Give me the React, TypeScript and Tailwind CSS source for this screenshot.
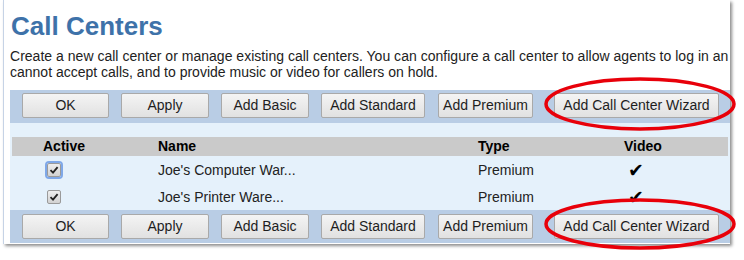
import React from "react";

const btn =
  "h-[25px] shrink-0 rounded-[2px] border border-[#a9a9a9] bg-gradient-to-b from-[#f4f4f4] to-[#e1e1e1] text-[14px] leading-[23px] text-[#1e1e1e] text-center";

function ButtonBar({ pt, pb }: { pt: string; pb: string }) {
  return (
    <div className={`flex bg-[#b9cde5] pl-[12px] ${pt} ${pb}`}>
      <div className={`${btn} w-[87px]`}>OK</div>
      <div className={`${btn} w-[88px] ml-[12px]`}>Apply</div>
      <div className={`${btn} w-[88px] ml-[12px]`}>Add Basic</div>
      <div className={`${btn} w-[104px] ml-[12px]`}>Add Standard</div>
      <div className={`${btn} w-[95px] ml-[13px]`}>Add Premium</div>
      <div className={`${btn} w-[165px] ml-[21px]`}>Add Call Center Wizard</div>
    </div>
  );
}

function Check({ focused }: { focused?: boolean }) {
  return (
    <div
      className={`flex h-[14px] w-[14px] items-center justify-center rounded-[2px] border border-[#9a9a9a] bg-gradient-to-b from-[#eeeeee] to-[#d2d2d2] ${
        focused ? "outline outline-2 outline-[#7fa8e8]" : ""
      }`}
    >
      <svg width="10" height="10" viewBox="0 0 10 10">
        <path d="M1.5 5.2 L4 7.6 L8.6 2.2" fill="none" stroke="#222" strokeWidth="1.8" />
      </svg>
    </div>
  );
}

function VideoCheck() {
  return (
    <div className="pl-[30px] text-[19px] leading-[20px] text-black" style={{ fontFamily: '"DejaVu Sans", sans-serif' }}>
      ✔
    </div>
  );
}

export default function App() {
  return (
    <div
      className="relative h-[260px] w-[744px] overflow-hidden bg-white"
      style={{ fontFamily: '"Liberation Sans", Arial, sans-serif' }}
    >
      <div className="ml-[3px] h-[244px] w-[727px] overflow-hidden border-l border-[#c6d3e6] bg-white pl-[6px] shadow-[2px_2px_3px_rgba(0,0,0,0.45)]">
        <div className="pt-[10px] pl-[1px] text-[26px] font-bold leading-[32px] text-[#3e72a9]">
          Call Centers
        </div>
        <div className="mt-[6px] overflow-hidden whitespace-nowrap text-[14px] leading-[16px] text-[#222]">
          <div className="tracking-[0.02px]">
            Create a new call center or manage existing call centers. You can configure a call center to allow agents to log in an
          </div>
          <div>cannot accept calls, and to provide music or video for callers on hold.</div>
        </div>
        <div className="mt-[10px]">
          <ButtonBar pt="pt-[3px]" pb="pb-[5px]" />
          <div className="bg-[#e5f1fb] px-[2px] pt-[14px]">
            <div className="flex h-[19px] items-center bg-[#cacaca] text-[14px] font-bold leading-[19px] text-black">
              <div className="w-[146px] pl-[31px]">Active</div>
              <div className="w-[320px]">Name</div>
              <div className="w-[120px]">Type</div>
              <div className="pl-[26px]">Video</div>
            </div>
            <div className="flex h-[28px] items-center text-[14px] text-[#222]">
              <div className="w-[146px] pl-[35px]">
                <Check focused />
              </div>
              <div className="w-[320px]">Joe's Computer War...</div>
              <div className="w-[120px]">Premium</div>
              <VideoCheck />
            </div>
            <div className="flex h-[26px] items-center text-[14px] text-[#222]">
              <div className="w-[146px] pl-[35px]">
                <Check />
              </div>
              <div className="w-[320px]">Joe's Printer Ware...</div>
              <div className="w-[120px]">Premium</div>
              <VideoCheck />
            </div>
          </div>
          <ButtonBar pt="pt-[4px]" pb="pb-[4px]" />
        </div>
      </div>
      <svg className="pointer-events-none absolute left-0 top-0" width="744" height="260">
        <ellipse cx="640" cy="104" rx="94" ry="25" fill="none" stroke="#e8000a" strokeWidth="3.5" />
        <ellipse cx="640" cy="224" rx="94" ry="24" fill="none" stroke="#e8000a" strokeWidth="3.5" />
      </svg>
    </div>
  );
}
